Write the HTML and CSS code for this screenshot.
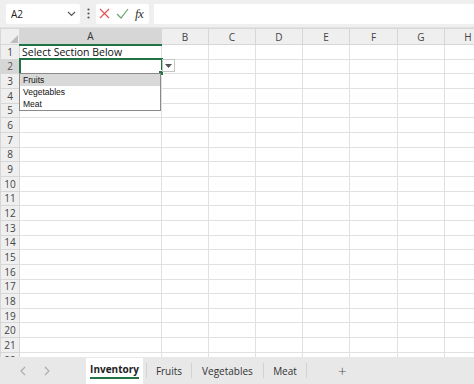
FILE: index.html
```html
<!DOCTYPE html>
<html lang="en">
<head>
  <meta charset="UTF-8">
  <title>Inventory</title>
  <link rel="stylesheet" href="styles.css">
</head>
<body>
<div class="app">

  <div class="toolbar">
    <div class="namebox">
      <span>A2</span>
      <svg width="9" height="6" viewBox="0 0 9 6"><path d="M1 1l3.5 3.5L8 1" fill="none" stroke="#555" stroke-width="1.2"/></svg>
    </div>
    <svg class="dots" width="3" height="11" viewBox="0 0 3 11"><circle cx="1.5" cy="1.5" r="1.1" fill="#555"/><circle cx="1.5" cy="5.5" r="1.1" fill="#555"/><circle cx="1.5" cy="9.5" r="1.1" fill="#555"/></svg>
    <div class="fbtns">
      <svg width="11" height="11" viewBox="0 0 11 11"><path d="M1 1l9 9M10 1l-9 9" stroke="#e05454" stroke-width="1.2"/></svg>
      <svg width="13" height="11" viewBox="0 0 13 11"><path d="M1 6l4 4 7-9" fill="none" stroke="#6aa56a" stroke-width="1.2"/></svg>
      <span class="fx">fx</span>
    </div>
    <div class="formula"></div>
  </div>

  <div class="sheet">
    <table class="grid">
      <colgroup>
        <col style="width:19px"><col style="width:142px"><col style="width:47px"><col style="width:47px"><col style="width:47px"><col style="width:47px"><col style="width:48px"><col style="width:47px"><col style="width:47px">
      </colgroup>
      <tr class="head">
        <th class="corner"><svg width="8" height="8" viewBox="0 0 8 8"><path d="M8 0v8H0z" fill="#bdbdbd"/></svg></th>
        <th class="on">A</th><th>B</th><th>C</th><th>D</th><th>E</th><th>F</th><th>G</th><th>H</th>
      </tr>
      <tr><th>1</th><td class="txt">Select Section Below</td><td></td><td></td><td></td><td></td><td></td><td></td><td></td></tr>
      <tr><th class="on">2</th><td class="sel"><i class="handle"></i></td><td></td><td></td><td></td><td></td><td></td><td></td><td></td></tr>
      <tr><th>3</th><td></td><td></td><td></td><td></td><td></td><td></td><td></td><td></td></tr>
      <tr><th>4</th><td></td><td></td><td></td><td></td><td></td><td></td><td></td><td></td></tr>
      <tr><th>5</th><td></td><td></td><td></td><td></td><td></td><td></td><td></td><td></td></tr>
      <tr><th>6</th><td></td><td></td><td></td><td></td><td></td><td></td><td></td><td></td></tr>
      <tr><th>7</th><td></td><td></td><td></td><td></td><td></td><td></td><td></td><td></td></tr>
      <tr><th>8</th><td></td><td></td><td></td><td></td><td></td><td></td><td></td><td></td></tr>
      <tr><th>9</th><td></td><td></td><td></td><td></td><td></td><td></td><td></td><td></td></tr>
      <tr><th>10</th><td></td><td></td><td></td><td></td><td></td><td></td><td></td><td></td></tr>
      <tr><th>11</th><td></td><td></td><td></td><td></td><td></td><td></td><td></td><td></td></tr>
      <tr><th>12</th><td></td><td></td><td></td><td></td><td></td><td></td><td></td><td></td></tr>
      <tr><th>13</th><td></td><td></td><td></td><td></td><td></td><td></td><td></td><td></td></tr>
      <tr><th>14</th><td></td><td></td><td></td><td></td><td></td><td></td><td></td><td></td></tr>
      <tr><th>15</th><td></td><td></td><td></td><td></td><td></td><td></td><td></td><td></td></tr>
      <tr><th>16</th><td></td><td></td><td></td><td></td><td></td><td></td><td></td><td></td></tr>
      <tr><th>17</th><td></td><td></td><td></td><td></td><td></td><td></td><td></td><td></td></tr>
      <tr><th>18</th><td></td><td></td><td></td><td></td><td></td><td></td><td></td><td></td></tr>
      <tr><th>19</th><td></td><td></td><td></td><td></td><td></td><td></td><td></td><td></td></tr>
      <tr><th>20</th><td></td><td></td><td></td><td></td><td></td><td></td><td></td><td></td></tr>
      <tr><th>21</th><td></td><td></td><td></td><td></td><td></td><td></td><td></td><td></td></tr>
      <tr><th>22</th><td></td><td></td><td></td><td></td><td></td><td></td><td></td><td></td></tr>
    </table>

    <div class="dd-btn"><svg width="7" height="4" viewBox="0 0 7 4"><path d="M0 0h7L3.5 4z" fill="#555"/></svg></div>
    <div class="dd-list">
      <div class="item hot">Fruits</div>
      <div class="item">Vegetables</div>
      <div class="item">Meat</div>
    </div>
  </div>

  <div class="tabs">
    <div class="nav">
      <svg width="6" height="10" viewBox="0 0 6 10"><path d="M5 1L1 5l4 4" fill="none" stroke="#aaa" stroke-width="1.1"/></svg>
      <svg width="6" height="10" viewBox="0 0 6 10"><path d="M1 1l4 4-4 4" fill="none" stroke="#aaa" stroke-width="1.1"/></svg>
    </div>
    <div class="tab active"><span>Inventory</span></div>
    <div class="tab t-fruits">Fruits</div>
    <div class="tab t-veg">Vegetables</div>
    <div class="tab t-meat">Meat</div>
    <div class="add">+</div>
  </div>

</div>
</body>
</html>
```

FILE: styles.css
```css
html, body {
  margin: 0;
  padding: 0;
}

body {
  width: 474px;
  height: 384px;
  overflow: hidden;
  background: #fff;
  font-family: "Open Sans", "Noto Sans", sans-serif;
}

.app {
  display: flex;
  flex-direction: column;
  height: 384px;
}

/* formula bar */
.toolbar {
  height: 28px;
  background: #efefef;
  display: flex;
  align-items: center;
  padding-left: 6px;
  box-sizing: border-box;
  border-bottom: 1px solid #e2e2e2;
  flex: none;
}

.namebox {
  width: 74px;
  height: 20px;
  background: #fff;
  border-radius: 2px;
  display: flex;
  align-items: center;
  justify-content: space-between;
  padding: 0 4px 0 5px;
  box-sizing: border-box;
  font-size: 10px;
  color: #222;
}

.dots {
  margin-left: 7px;
}

.fbtns {
  margin-left: 6px;
  width: 53px;
  height: 20px;
  background: #fff;
  border-radius: 2px;
  display: flex;
  align-items: center;
  gap: 6px;
  padding-left: 3px;
  box-sizing: border-box;
}

.fx {
  font-family: "Liberation Serif", serif;
  font-style: italic;
  font-size: 13px;
  color: #333;
  letter-spacing: -0.5px;
}

.formula {
  margin-left: 5px;
  flex: 1;
  height: 20px;
  background: #fff;
}

/* sheet */
.sheet {
  position: relative;
  flex: 1;
  overflow: hidden;
}

.grid {
  border-collapse: collapse;
  table-layout: fixed;
  width: 491px;
}

.grid tr {
  height: 14.67px;
}

.grid tr.head {
  height: 16px;
}

.grid th {
  background: #efefef;
  border: 1px solid #d7d7d7;
  font-weight: normal;
  font-size: 10px;
  color: #444;
  padding: 0;
  line-height: 12px;
}

.grid th.on {
  background: #d6d6d6;
  color: #555;
}

.grid tr.head th.on {
  border-bottom: 2px solid #217346;
  color: #333;
}

.grid tr:not(.head) th {
  text-align: center;
}

.grid th.corner {
  text-align: right;
  vertical-align: bottom;
}

.grid th.corner svg {
  display: block;
  margin: 0 1px 1px auto;
}

.grid td {
  border: 1px solid #e1e1e1;
  padding: 0 2px;
  font-size: 11px;
  line-height: 12px;
  color: #111;
  white-space: nowrap;
}

.grid td.txt {
  font-family: "Open Sans", sans-serif;
  font-size: 10.5px;
  padding-left: 2px;
}

.grid td.sel {
  position: relative;
  outline: 2px solid #217346;
  outline-offset: -1px;
}

.handle {
  position: absolute;
  right: -3px;
  bottom: -3px;
  width: 4px;
  height: 4px;
  background: #217346;
  border: 1px solid #fff;
}

/* validation dropdown */
.dd-btn {
  position: absolute;
  left: 162px;
  top: 31px;
  width: 11px;
  height: 11px;
  background: #fff;
  border: 1px solid #c6c6c6;
  display: flex;
  align-items: center;
  justify-content: center;
}

.dd-list {
  position: absolute;
  left: 19px;
  top: 45px;
  width: 142px;
  height: 38px;
  background: #fff;
  border: 1px solid #8a8a8a;
  box-sizing: border-box;
  font-family: "Liberation Sans", sans-serif;
  font-size: 8.5px;
  color: #111;
}

.item {
  height: 12px;
  line-height: 12px;
  padding-left: 3px;
}

.item.hot {
  background: #d9d9d9;
}

/* sheet tabs */
.tabs {
  height: 27px;
  flex: none;
  background: #e8e8e8;
  display: flex;
  align-items: stretch;
  font-size: 10px;
  color: #333;
}

.nav {
  width: 86px;
  display: flex;
  align-items: center;
  gap: 18px;
  padding-left: 20px;
  box-sizing: border-box;
}

.tab {
  display: flex;
  align-items: center;
  justify-content: center;
  position: relative;
}

.tab.active {
  width: 57px;
  margin-top: 1px;
  background: #fff;
  font-weight: bold;
  color: #222;
}

.tab.active span {
  border-bottom: 2px solid #217346;
  line-height: 13px;
  padding-bottom: 1px;
}

.t-fruits { width: 44px; border-left: 1px solid #d2d2d2; margin-left: 3px; margin-top: 6px; margin-bottom: 6px; }
.t-veg { width: 71px; border-left: 1px solid #d2d2d2; margin-top: 6px; margin-bottom: 6px; }
.t-meat { width: 42px; border-left: 1px solid #d2d2d2; border-right: 1px solid #d2d2d2; margin-top: 6px; margin-bottom: 6px; }

.add {
  margin-left: 31px;
  display: flex;
  align-items: center;
  font-size: 15px;
  font-weight: 300;
  color: #555;
}
```
